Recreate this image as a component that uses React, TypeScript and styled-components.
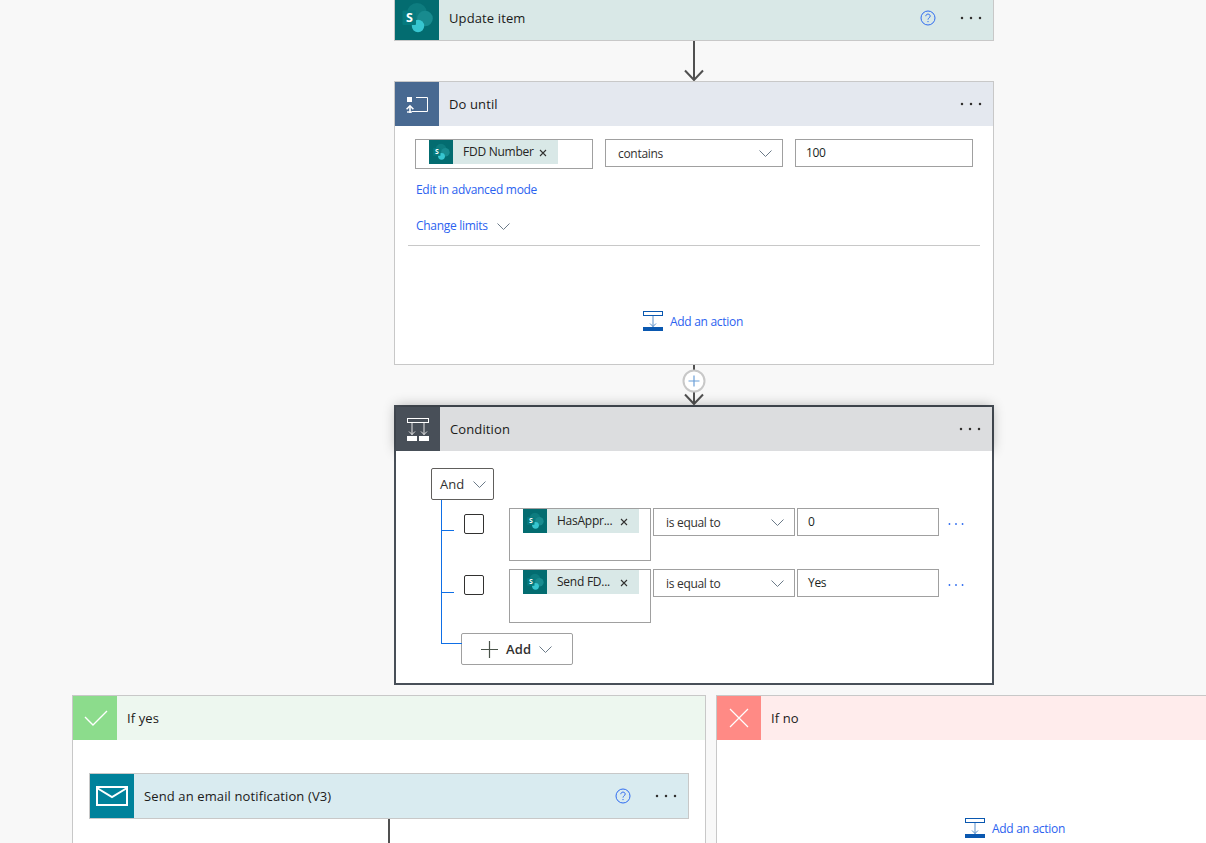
import React from "react";
import styled, { createGlobalStyle } from "styled-components";

const Global = createGlobalStyle`
  html, body { margin: 0; padding: 0; height: 843px; overflow: hidden; background: #f8f8f8; }
  body { font-family: "Open Sans", "Noto Sans", "Liberation Sans", sans-serif; color: #201f1e; font-size: 13px; }
  * { box-sizing: border-box; }
`;

const Canvas = styled.div`
  width: 1206px;
  height: 843px;
  overflow: hidden;
  display: flex;
  flex-direction: column;
`;
const Column = styled.div`
  width: 600px;
  margin: -5px 0 0 394px;
  display: flex;
  flex-direction: column;
  flex: none;
`;
const Card = styled.section<{ $selected?: boolean; $w?: number }>`
  width: ${(p) => (p.$w ? `${p.$w}px` : "100%")};
  flex: none;
  background: #fff;
  border: ${(p) => (p.$selected ? "2px solid #484f58" : "1px solid #c8c8c8")};
  position: relative;
`;
const Header = styled.header<{ $bg: string; $shadow?: boolean }>`
  height: 44px;
  display: flex;
  align-items: center;
  background: ${(p) => p.$bg};
  ${(p) => (p.$shadow ? "box-shadow: 0 -1px 12px rgba(0,0,0,.3); position: relative;" : "")}
`;
const IconBlock = styled.div<{ $bg: string }>`
  width: 44px;
  height: 44px;
  flex: none;
  display: flex;
  background: ${(p) => p.$bg};
`;
const Title = styled.h3`
  margin: 0 0 0 10px;
  font-size: 13px;
  font-weight: 400;
  letter-spacing: 0.12px;
  line-height: 18px;
  flex: 1;
  color: #1b1a19;
`;
const HelpSlot = styled.div`
  display: flex;
  margin-right: 24px;
`;
const MoreSlot = styled.div`
  display: flex;
  margin-right: 11px;
`;
const ConnectorWrap = styled.div<{ $left?: number }>`
  height: 40px;
  flex: none;
  display: flex;
  justify-content: center;
  ${(p) => (p.$left !== undefined ? `width: 24px; margin-left: ${p.$left}px;` : "")}
`;
const LoopBody = styled.div`
  height: 238px;
  padding: 13px 13px 0;
  display: flex;
  flex-direction: column;
`;
const ExprRow = styled.div`
  display: flex;
  align-items: flex-start;
  gap: 12px;
  padding: 0 7px;
`;
const TokenField = styled.div<{ $w: number; $h: number }>`
  width: ${(p) => p.$w}px;
  height: ${(p) => p.$h}px;
  flex: none;
  background: #fff;
  border: 1px solid #a0a0a0;
  padding-left: 13px;
`;
const Token = styled.div<{ $w: number }>`
  width: ${(p) => p.$w}px;
  height: 24px;
  display: flex;
  align-items: center;
  background: #d9e8e7;
`;
const TokenIcon = styled.div`
  width: 24px;
  height: 24px;
  flex: none;
  display: flex;
  background: #036c70;
`;
const TokenLabel = styled.span`
  margin-left: 10px;
  flex: 1;
  font-size: 12px;
  letter-spacing: -0.25px;
  line-height: 16px;
  white-space: nowrap;
  color: #252423;
`;
const TokenClose = styled.div<{ $right: number }>`
  display: flex;
  margin: 2px ${(p) => p.$right}px 0 0;
`;
const SelectBox = styled.div<{ $w: number }>`
  width: ${(p) => p.$w}px;
  height: 28px;
  flex: none;
  display: flex;
  align-items: center;
  justify-content: space-between;
  padding: 1px 10px 0 12px;
  background: #fff;
  border: 1px solid #a0a0a0;
  font-size: 12px;
  letter-spacing: -0.3px;
  color: #323130;
`;
const ValueBox = styled.div<{ $w: number }>`
  width: ${(p) => p.$w}px;
  height: 28px;
  flex: none;
  padding: 4px 10px 0;
  line-height: 18px;
  background: #fff;
  border: 1px solid #a0a0a0;
  font-size: 12px;
  letter-spacing: -0.3px;
  color: #201f1e;
`;
const TextLink = styled.a<{ $mt?: number }>`
  display: flex;
  align-items: center;
  gap: 9px;
  margin: ${(p) => p.$mt ?? 0}px 0 0 8px;
  font-size: 12px;
  letter-spacing: -0.3px;
  line-height: 16px;
  color: #2b62f0;
`;
const Divider = styled.hr`
  width: 100%;
  height: 1px;
  margin: 11px 0 0;
  border: 0;
  background: #c8c8c8;
`;
const AddAction = styled.a<{ $mt: number }>`
  display: flex;
  align-items: center;
  justify-content: center;
  gap: 7px;
  margin-top: ${(p) => p.$mt}px;
  padding-right: 2px;
  font-size: 12px;
  letter-spacing: -0.3px;
  color: #2b62f0;
`;
const ConditionBody = styled.div`
  position: relative;
  z-index: 1;
  background: #fff;
  padding: 17px 0 18px 35px;
`;
const AndSelect = styled.div`
  width: 63px;
  height: 32px;
  display: flex;
  align-items: center;
  justify-content: space-between;
  padding: 0 7px 0 8px;
  background: #fff;
  border: 1px solid #605e5c;
  border-radius: 2px;
  font-size: 13px;
  color: #323130;
`;
const Tree = styled.div`
  position: relative;
  display: flex;
  flex-direction: column;
  gap: 8px;
  padding-top: 8px;
  &::before {
    content: "";
    position: absolute;
    left: 10px;
    top: 0;
    bottom: 21px;
    width: 20px;
    border-left: 1px solid #0f6fe6;
    border-bottom: 1px solid #0f6fe6;
  }
`;
const Rule = styled.div<{ $h: number; $tick: number }>`
  position: relative;
  display: flex;
  align-items: flex-start;
  height: ${(p) => p.$h}px;
  padding-left: 78px;
  gap: 2px;
  &::before {
    content: "";
    position: absolute;
    left: 10px;
    top: ${(p) => p.$tick}px;
    width: 13px;
    height: 1px;
    background: #0f6fe6;
  }
`;
const Check = styled.div`
  position: absolute;
  left: 33px;
  top: 6px;
  width: 20px;
  height: 20px;
  border: 1px solid #323130;
  border-radius: 2px;
  background: #fff;
`;
const RuleMore = styled.div`
  display: flex;
  margin: 14px 0 0 7px;
`;
const AddButton = styled.button`
  width: 112px;
  height: 32px;
  margin: 2px 0 0 30px;
  display: flex;
  align-items: center;
  padding: 0 0 0 19px;
  background: #fff;
  border: 1px solid #a0a0a0;
  border-radius: 2px;
  font: 600 13px "Open Sans", sans-serif;
  letter-spacing: 0.2px;
  color: #323130;
`;
const AddLabel = styled.span`
  margin: 0 8px 0 8px;
`;
const Branches = styled.div`
  display: flex;
  gap: 10px;
  margin: 10px 0 0 72px;
  flex: none;
`;
const BranchBody = styled.div<{ $h: number; $pt: number; $px?: number }>`
  height: ${(p) => p.$h}px;
  padding: ${(p) => p.$pt}px ${(p) => p.$px ?? 0}px 0;
  display: flex;
  flex-direction: column;
`;
const ConnectorSvg = styled.svg`
  flex: none;
`;

const SharePoint = ({ size }: { size: number }) => (
  <svg width={size} height={size} viewBox="0 0 44 44">
    <circle cx="22" cy="17" r="10" fill="#0d7c7f" />
    <circle cx="30" cy="22.5" r="7.8" fill="#188b8f" />
    <circle cx="23" cy="30" r="6.2" fill="#37c6d0" />
    <rect x="7.5" y="14.5" width="13.5" height="14.5" rx="1" fill="#057a7e" />
    <text x="14.4" y="26.4" fontSize="12.5" fontWeight="700" textAnchor="middle" fill="#fff" fontFamily="Open Sans, sans-serif">S</text>
  </svg>
);
const Help = () => (
  <svg width="16" height="16" viewBox="0 0 16 16" fill="none">
    <circle cx="8" cy="8" r="7" stroke="#2f6cf0" strokeWidth="1" />
    <path d="M5.8 6.2c0-1.3 1-2.1 2.2-2.1s2.2.8 2.2 2c0 1.7-2.2 1.7-2.2 3.5" stroke="#2f6cf0" strokeWidth="1" />
    <circle cx="8" cy="11.6" r=".7" fill="#2f6cf0" />
  </svg>
);
const Dots = ({ color = "#323130", w = 22 }: { color?: string; w?: number }) => (
  <svg width={w} height="4" viewBox="0 0 22 4">
    <circle cx="2" cy="2" r="1.25" fill={color} />
    <circle cx="11" cy="2" r="1.25" fill={color} />
    <circle cx="20" cy="2" r="1.25" fill={color} />
  </svg>
);
const Chevron = ({ w = 13 }: { w?: number }) => (
  <svg width={w} height="7" viewBox="0 0 13 7" fill="none">
    <path d="M.5.5l6 6 6-6" stroke="#6b7a88" strokeWidth="1" />
  </svg>
);
const SmallX = () => (
  <svg width="8" height="8" viewBox="0 0 8 8" fill="none">
    <path d="M1 1l6 6M7 1L1 7" stroke="#323130" strokeWidth="1.1" />
  </svg>
);
const Connector = ({ plus }: { plus?: boolean }) => (
  <ConnectorSvg width="24" height="40" viewBox="0 0 24 40" fill="none">
    <path d="M12 0v39" stroke="#505050" strokeWidth="2" />
    <path d="M3 29.5l9 9.5 9-9.5" stroke="#505050" strokeWidth="2" />
    {plus && (
      <>
        <circle cx="12" cy="16" r="10.5" fill="#fff" stroke="#c8c8c8" strokeWidth="2" />
        <path d="M12 10.5v11M6.5 16h11" stroke="#6b9fd8" strokeWidth="1.2" />
      </>
    )}
  </ConnectorSvg>
);
const AddActionIcon = () => (
  <svg width="20" height="20" viewBox="0 0 20 20" fill="none">
    <rect x=".5" y=".5" width="19" height="4" stroke="#0a58b0" />
    <path d="M10 5v11" stroke="#5a8fc8" />
    <path d="M7 12.5l3 3 3-3" stroke="#5a8fc8" />
    <rect y="16" width="20" height="4" fill="#0a58b0" />
  </svg>
);
const LoopIcon = () => (
  <svg width="44" height="44" viewBox="0 0 44 44" fill="none">
    <rect x="12" y="15" width="5" height="5" fill="#fff" />
    <path d="M21 15.5h11.5v14H17" stroke="#fff" />
    <path d="M15 31v-7" stroke="#fff" strokeWidth="1.6" />
    <path d="M11.6 27.2l3.4-3.4 3.4 3.4" stroke="#fff" strokeWidth="1.6" />
    <path d="M12 30h5" stroke="#fff" strokeWidth="1.4" />
  </svg>
);
const ConditionIcon = () => (
  <svg width="44" height="44" viewBox="0 0 44 44" fill="none">
    <rect x="11.5" y="11.5" width="21" height="4" stroke="#fff" />
    <path d="M16 16v12M13 24.5l3 3 3-3M28 16v12M25 24.5l3 3 3-3" stroke="#e4e4e4" />
    <rect x="11" y="29" width="10" height="5" fill="#fff" />
    <rect x="23" y="29" width="10" height="5" fill="#fff" />
  </svg>
);
const MailIcon = () => (
  <svg width="44" height="44" viewBox="0 0 44 44" fill="none">
    <rect x="7" y="13" width="30" height="18" stroke="#fff" strokeWidth="2" />
    <path d="M7 14l15 9 15-9" stroke="#fff" strokeWidth="2" />
  </svg>
);
const CheckIcon = () => (
  <svg width="44" height="44" viewBox="0 0 44 44" fill="none">
    <path d="M12 21l8 8 14-14" stroke="#fff" strokeWidth="1.4" />
  </svg>
);
const CrossIcon = () => (
  <svg width="44" height="44" viewBox="0 0 44 44" fill="none">
    <path d="M13 13l18 18M31 13L13 31" stroke="#fff" strokeWidth="1.2" />
  </svg>
);

const ExprToken = ({ label, w, right }: { label: string; w: number; right: number }) => (
  <Token $w={w}>
    <TokenIcon>
      <SharePoint size={24} />
    </TokenIcon>
    <TokenLabel>{label}</TokenLabel>
    <TokenClose $right={right}>
      <SmallX />
    </TokenClose>
  </Token>
);

const ConditionRule = ({ label, value, h, tick }: { label: string; value: string; h: number; tick: number }) => (
  <Rule $h={h} $tick={tick}>
    <Check />
    <TokenField $w={142} $h={h}>
      <ExprToken label={label} w={116} right={11} />
    </TokenField>
    <SelectBox $w={142}>
      is equal to
      <Chevron />
    </SelectBox>
    <ValueBox $w={142}>{value}</ValueBox>
    <RuleMore>
      <Dots color="#2f6cf0" w={16} />
    </RuleMore>
  </Rule>
);

const AddActionLink = ({ mt }: { mt: number }) => (
  <AddAction $mt={mt}>
    <AddActionIcon />
    Add an action
  </AddAction>
);

export default function App() {
  return (
    <Canvas>
      <Global />
      <Column>
        <Card>
          <Header $bg="#d9e8e7">
            <IconBlock $bg="#036c70">
              <SharePoint size={44} />
            </IconBlock>
            <Title>Update item</Title>
            <HelpSlot>
              <Help />
            </HelpSlot>
            <MoreSlot>
              <Dots />
            </MoreSlot>
          </Header>
        </Card>
        <ConnectorWrap>
          <Connector />
        </ConnectorWrap>
        <Card>
          <Header $bg="#e4e8ef">
            <IconBlock $bg="#486991">
              <LoopIcon />
            </IconBlock>
            <Title>Do until</Title>
            <MoreSlot>
              <Dots />
            </MoreSlot>
          </Header>
          <LoopBody>
            <ExprRow>
              <TokenField $w={178} $h={30}>
                <ExprToken label="FDD Number" w={129} right={11} />
              </TokenField>
              <SelectBox $w={178}>
                contains
                <Chevron />
              </SelectBox>
              <ValueBox $w={178}>100</ValueBox>
            </ExprRow>
            <TextLink $mt={13}>Edit in advanced mode</TextLink>
            <TextLink $mt={20}>
              Change limits
              <Chevron />
            </TextLink>
            <Divider />
            <AddActionLink mt={65} />
          </LoopBody>
        </Card>
        <ConnectorWrap>
          <Connector plus />
        </ConnectorWrap>
        <Card $selected>
          <Header $bg="#dcdddf" $shadow>
            <IconBlock $bg="#484f58">
              <ConditionIcon />
            </IconBlock>
            <Title>Condition</Title>
            <MoreSlot>
              <Dots />
            </MoreSlot>
          </Header>
          <ConditionBody>
            <AndSelect>
              And
              <Chevron />
            </AndSelect>
            <Tree>
              <ConditionRule label="HasAppr..." value="0" h={53} tick={22} />
              <ConditionRule label="Send FD..." value="Yes" h={54} tick={23} />
              <AddButton>
                <svg width="17" height="17" viewBox="0 0 17 17" fill="none">
                  <path d="M8.5 0v17M0 8.5h17" stroke="#4a534a" strokeWidth="1.2" />
                </svg>
                <AddLabel>Add</AddLabel>
                <Chevron />
              </AddButton>
            </Tree>
          </ConditionBody>
        </Card>
      </Column>
      <Branches>
        <Card $w={634}>
          <Header $bg="#edf7ef">
            <IconBlock $bg="#8cdc8c">
              <CheckIcon />
            </IconBlock>
            <Title>If yes</Title>
          </Header>
          <BranchBody $h={260} $pt={33} $px={16}>
            <Card>
              <Header $bg="#d9ebf0">
                <IconBlock $bg="#00829b">
                  <MailIcon />
                </IconBlock>
                <Title>Send an email notification (V3)</Title>
                <HelpSlot>
                  <Help />
                </HelpSlot>
                <MoreSlot>
                  <Dots />
                </MoreSlot>
              </Header>
            </Card>
            <ConnectorWrap $left={288}>
              <Connector />
            </ConnectorWrap>
          </BranchBody>
        </Card>
        <Card $w={600}>
          <Header $bg="#ffecec">
            <IconBlock $bg="#ff8a85">
              <CrossIcon />
            </IconBlock>
            <Title>If no</Title>
          </Header>
          <BranchBody $h={260} $pt={78}>
            <AddActionLink mt={0} />
          </BranchBody>
        </Card>
      </Branches>
    </Canvas>
  );
}
